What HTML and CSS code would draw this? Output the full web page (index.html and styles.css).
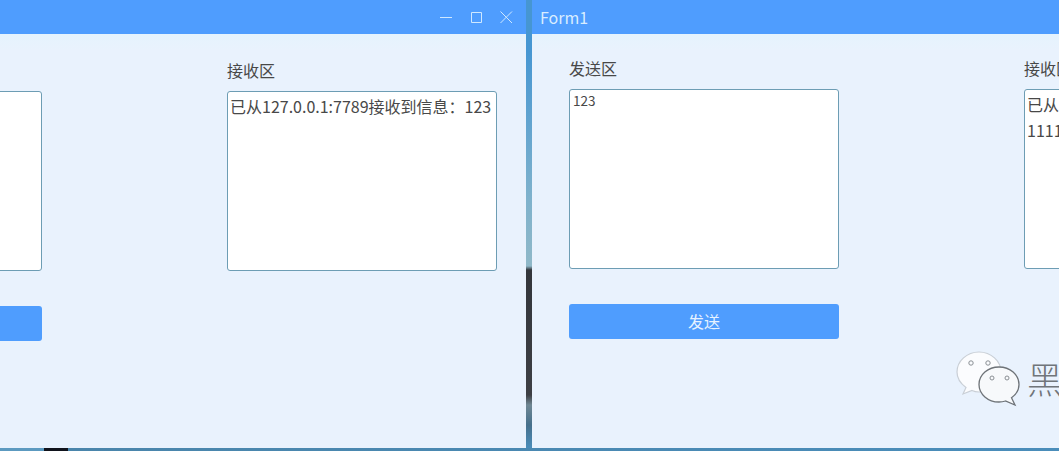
FILE: index.html
```html
<!DOCTYPE html>
<html lang="en">
<head>
    <meta charset="UTF-8">
    <meta name="viewport" content="width=device-width, initial-scale=1.0">
    <title>Form1</title>
    <link rel="stylesheet" href="styles.css">
</head>
<body>
    <div class="desktop">
        <div class="windows">
            <div class="window window-left">
                <div class="titlebar">
                    <span class="form-title">Form1</span>
                    <div class="controls">
                        <svg class="ctl" viewBox="0 0 14 14"><path d="M1 7.500H13"/></svg>
                        <svg class="ctl" viewBox="0 0 14 14"><path d="M2.500 2.500H12.500V12.500H2.500Z"/></svg>
                        <svg class="ctl" viewBox="0 0 14 14"><path d="M1.500 1.500L13 13M13 1.500L1.500 13"/></svg>
                    </div>
                </div>
                <div class="form-body">
                    <div class="col">
                        <label class="col-label">发送区</label>
                        <div class="box"></div>
                        <button class="btn-send">发送</button>
                    </div>
                    <div class="col">
                        <label class="col-label">接收区</label>
                        <div class="box box-recv">已从127.0.0.1:7789接收到信息：123</div>
                    </div>
                </div>
            </div>
            <div class="window window-right">
                <div class="titlebar">
                    <span class="form-title">Form1</span>
                </div>
                <div class="form-body">
                    <div class="col">
                        <label class="col-label">发送区</label>
                        <div class="box box-send">123</div>
                        <button class="btn-send">发送</button>
                    </div>
                    <div class="col">
                        <label class="col-label">接收区</label>
                        <div class="box box-recv">已从127.0.0.1:7788接收到信息：1111</div>
                    </div>
                </div>
            </div>
        </div>
        <div class="taskbar-strip"></div>
    </div>

    <div class="watermark">
        <svg class="wechat" viewBox="0 0 66 58">
            <path class="bubble-back" d="M23 3C11 3 1 12 1 23C1 29.500 4.500 34.500 10 38.500L7 45L16 41.500C18 42.500 20.500 43 23 43C35 43 45 34 45 23C45 12 35 3 23 3Z"/>
            <path class="bubble-front" d="M43 18C32 18 23 25.800 23 35.500C23 45.200 32 53 43 53C45.500 53 47.500 52.600 49.500 52L59 56L55.500 48.800C60 45.500 63 40.800 63 35.500C63 25.800 54 18 43 18Z"/>
            <circle class="eye" cx="15" cy="14" r="2.200"/>
            <circle class="eye" cx="32" cy="14" r="2.200"/>
            <circle class="eye" cx="36" cy="29" r="2"/>
            <circle class="eye" cx="51" cy="29" r="2"/>
        </svg>
        <span class="wm-text">黑客</span>
    </div>
</body>
</html>
```

FILE: styles.css
```css
html, body { margin: 0; padding: 0; height: 100%; overflow: hidden; }
body { font-family: "Noto Sans CJK SC", "Noto Sans", sans-serif; color: #333; background: #4a8fbc; }

.desktop { width: 1059px; height: 451px; overflow: hidden; display: flex; flex-direction: column; }
.windows {
    display: flex;
    gap: 6px;
    height: 448px;
    margin-left: -265px;
    width: 1588px;
    background: linear-gradient(to bottom, #4696d2 0, #4696d2 50px, #7fb2cc 200px, #8fb8c8 266px, #33363b 270px, #3d3f44 395px, #6f8793 405px, #46708c 425px, #4a8dba 448px);
}
.window { width: 791px; flex-shrink: 0; background: #e9f2fd; display: flex; flex-direction: column; }
.titlebar { height: 34px; flex-shrink: 0; background: #4f9dfe; display: flex; align-items: center; justify-content: space-between; padding: 0 13px 0 8px; box-sizing: border-box; }
.form-title { font-size: 16px; color: #d9edff; }
.window-left .form-title { visibility: hidden; }
.controls { display: flex; gap: 16px; align-items: center; }
.ctl { width: 14px; height: 14px; fill: none; stroke: #cfe8ff; stroke-width: 1; }

.form-body { flex: 1; display: flex; gap: 185px; padding: 0 37px; background: linear-gradient(to bottom, #e5f3fd 0, #e9f2fd 16px); }
.window-left .form-body { padding-top: 24px; }
.window-right .form-body { padding-top: 22px; }
.col { width: 270px; flex-shrink: 0; }
.col-label { display: block; height: 24px; margin-bottom: 9px; font-size: 16px; line-height: 24px; color: #484848; }
.box { height: 180px; box-sizing: border-box; background: #fff; border: 1px solid #6d9db4; border-radius: 3px; padding: 1px 2px; font-size: 16px; line-height: 26px; color: #484848; overflow: hidden; }
.box-send { font-size: 13.500px; line-height: 20px; padding: 0 3px; }
.btn-send { display: block; width: 270px; height: 35px; margin-top: 35px; padding: 0 0 2px; background: #4f9dfe; border: none; border-radius: 3px; color: #e6f2ff; font-family: inherit; font-size: 16px; }

.taskbar-strip { height: 3px; background: linear-gradient(to right, #5c9ac0 0, #5c9ac0 44px, #10131c 44px, #10131c 68px, #4a85ab 68px, #4a8dba 100%); }

.watermark { position: absolute; left: 956px; top: 349px; display: flex; align-items: center; gap: 5px; }
.wechat { width: 66px; height: 58px; flex-shrink: 0; }
.bubble-back { fill: #fbfcfe; stroke: #c9cfd6; stroke-width: 1.200; }
.bubble-front { fill: #f7f9fb; stroke: #6e7378; stroke-width: 1.300; }
.eye { fill: none; stroke: #8a8f94; stroke-width: 1; }
.wm-text { font-size: 36px; font-weight: 300; color: #70757a; white-space: nowrap; line-height: 58px; }
```
